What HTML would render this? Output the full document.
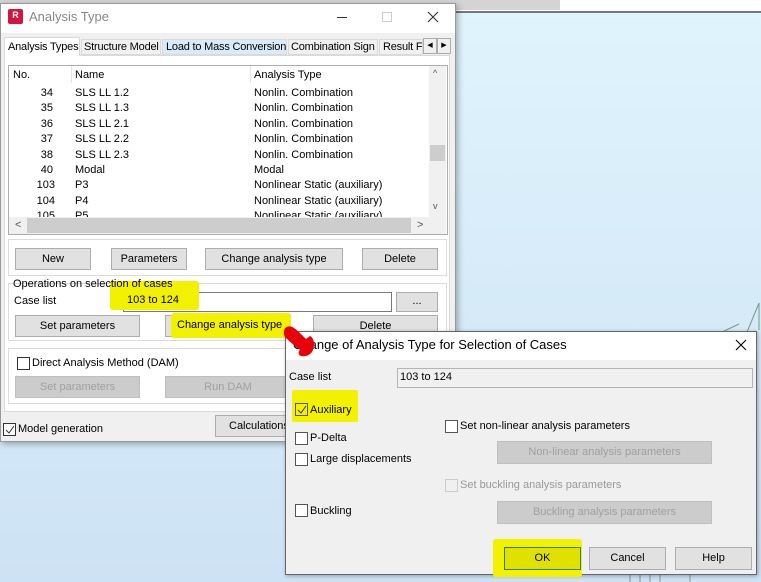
<!DOCTYPE html>
<html><head><meta charset="utf-8"><style>
*{box-sizing:border-box}
body{margin:0;width:761px;height:582px;overflow:hidden;position:relative;font-family:"Liberation Sans",Arial,sans-serif;font-size:11px;color:#000;background:linear-gradient(#e0f4fd,#cde2f4)}
.a{position:absolute;white-space:nowrap}
.btn{position:absolute;background:#e1e1e1;border:1px solid #adadad;text-align:center;font-size:11px;white-space:nowrap}
.dis{color:#a0a0a0;background:#cccccc;border-color:#bfbfbf}
.cb{position:absolute;width:13px;height:13px;border:1px solid #333;background:#fff}
.grp{position:absolute;border:1px solid #dcdcdc}
.hl{position:absolute;background:#f2f200}
.tab{position:absolute;border:1px solid #dadada;overflow:hidden;font-size:11px;letter-spacing:-0.2px;white-space:nowrap}
</style></head><body>
<div class="a" style="left:0;top:0;width:761px;height:11px;background:#fff"></div>
<div class="a" style="left:0;top:0;width:560px;height:10px;background:#d4d4d4"></div>
<div class="a" style="left:0;top:11px;width:761px;height:2px;background:#777"></div>

<div class="a" style="left:0;top:3px;width:456px;height:439px;background:#f0f0f0;border:1px solid #999;box-shadow:2px 2px 6px rgba(0,0,0,.3)"></div>
<div class="a" style="left:1px;top:4px;width:454px;height:29px;background:#fff"></div>
<div class="a" style="left:8px;top:9px;width:15px;height:15px;background:#d4163c;border-radius:2px;color:#fff;font-size:9px;font-weight:bold;text-align:center;line-height:12px">R</div>
<div class="a" style="left:29px;top:9px;font-size:13px;color:#888">Analysis Type</div>
<div class="a" style="left:337px;top:17px;width:10px;height:1px;background:#333"></div>
<div class="a" style="left:382px;top:12px;width:10px;height:10px;border:1px solid #ccc"></div>
<svg class="a" style="left:427px;top:11px" width="12" height="12"><path d="M1 1L11 11M11 1L1 11" stroke="#333" stroke-width="1.1"/></svg>

<div class="a" style="left:4px;top:55px;width:446px;height:357px;background:#fff;border:1px solid #dadada"></div>
<div class="tab" style="left:4px;top:37px;width:76px;height:19px;background:#fff;border-bottom:none;padding:3px 0 0 3px">Analysis Types</div>
<div class="tab" style="left:81px;top:39px;width:80px;height:16px;padding:1px 0 0 2px">Structure Model</div>
<div class="tab" style="left:162px;top:39px;width:125px;height:16px;background:#d9ebf9;padding:1px 0 0 3px">Load to Mass Conversion</div>
<div class="tab" style="left:288px;top:39px;width:90px;height:16px;padding:1px 0 0 2px">Combination Sign</div>
<div class="tab" style="left:379px;top:39px;width:44px;height:16px;padding:1px 0 0 3px">Result Fi</div>
<div class="a" style="left:423px;top:38px;width:14px;height:16px;border:1px solid #adadad;background:#f0f0f0;font-size:7px;text-align:center;line-height:14px">◀</div>
<div class="a" style="left:437px;top:38px;width:14px;height:16px;border:1px solid #adadad;background:#f0f0f0;font-size:7px;text-align:center;line-height:14px">▶</div>

<div class="a" style="left:8px;top:65px;width:440px;height:170px;background:#fff;border:1px solid #adadad"></div>
<div class="a" style="left:71px;top:66px;width:1px;height:17px;background:#e5e5e5"></div>
<div class="a" style="left:250px;top:66px;width:1px;height:17px;background:#e5e5e5"></div>
<div class="a" style="left:13px;top:69px">No.</div>
<div class="a" style="left:75px;top:69px">Name</div>
<div class="a" style="left:254px;top:69px">Analysis Type</div>
<div class="a" style="left:9px;top:84px;width:419px;height:133px;overflow:hidden">
<div style="position:absolute;left:0;top:2px;line-height:15.4px">
<div><span style="display:inline-block;width:66px;text-align:right;padding-right:22px">34</span><span style="display:inline-block;width:179px">SLS LL 1.2</span>Nonlin. Combination</div>
<div><span style="display:inline-block;width:66px;text-align:right;padding-right:22px">35</span><span style="display:inline-block;width:179px">SLS LL 1.3</span>Nonlin. Combination</div>
<div><span style="display:inline-block;width:66px;text-align:right;padding-right:22px">36</span><span style="display:inline-block;width:179px">SLS LL 2.1</span>Nonlin. Combination</div>
<div><span style="display:inline-block;width:66px;text-align:right;padding-right:22px">37</span><span style="display:inline-block;width:179px">SLS LL 2.2</span>Nonlin. Combination</div>
<div><span style="display:inline-block;width:66px;text-align:right;padding-right:22px">38</span><span style="display:inline-block;width:179px">SLS LL 2.3</span>Nonlin. Combination</div>
<div><span style="display:inline-block;width:66px;text-align:right;padding-right:22px">40</span><span style="display:inline-block;width:179px">Modal</span>Modal</div>
<div><span style="display:inline-block;width:66px;text-align:right;padding-right:20px">103</span><span style="display:inline-block;width:179px">P3</span>Nonlinear Static (auxiliary)</div>
<div><span style="display:inline-block;width:66px;text-align:right;padding-right:20px">104</span><span style="display:inline-block;width:179px">P4</span>Nonlinear Static (auxiliary)</div>
<div><span style="display:inline-block;width:66px;text-align:right;padding-right:20px">105</span><span style="display:inline-block;width:179px">P5</span>Nonlinear Static (auxiliary)</div>
</div></div>
<div class="a" style="left:429px;top:66px;width:17px;height:151px;background:#f0f0f0"></div>
<div class="a" style="left:433px;top:68px;font-size:9px;color:#555">^</div>
<div class="a" style="left:430px;top:145px;width:15px;height:16px;background:#cdcdcd"></div>
<div class="a" style="left:433px;top:201px;font-size:9px;color:#555">v</div>
<div class="a" style="left:9px;top:217px;width:437px;height:17px;background:#f0f0f0"></div>
<div class="a" style="left:27px;top:218px;width:384px;height:15px;background:#cdcdcd"></div>
<div class="a" style="left:15px;top:219px;color:#555">&lt;</div>
<div class="a" style="left:417px;top:219px;color:#555">&gt;</div>

<div class="grp" style="left:8px;top:239px;width:439px;height:37px"></div>
<div class="btn" style="left:15px;top:248px;width:76px;height:22px;line-height:20px">New</div>
<div class="btn" style="left:111px;top:248px;width:76px;height:22px;line-height:20px">Parameters</div>
<div class="btn" style="left:205px;top:248px;width:138px;height:22px;line-height:20px">Change analysis type</div>
<div class="btn" style="left:362px;top:248px;width:76px;height:22px;line-height:20px">Delete</div>

<div class="grp" style="left:8px;top:283px;width:439px;height:58px"></div>
<div class="a" style="left:123px;top:292px;width:269px;height:20px;border:1px solid #7a7a7a;background:#fff"></div>
<div class="hl" style="left:110px;top:281px;width:89px;height:29px;border-radius:3px"></div>
<div class="a" style="left:13px;top:278px">Operations on selection of cases</div>
<div class="a" style="left:14px;top:295px">Case list</div>
<div class="a" style="left:127px;top:294px">103 to 124</div>
<div class="btn" style="left:396px;top:292px;width:42px;height:20px;line-height:16px">...</div>
<div class="btn" style="left:15px;top:315px;width:125px;height:22px;line-height:20px">Set parameters</div>
<div class="btn" style="left:165px;top:315px;width:126px;height:22px"></div>
<div class="hl" style="left:171px;top:313px;width:120px;height:25px;border-radius:3px"></div>
<div class="a" style="left:177px;top:319px">Change analysis type</div>
<div class="btn" style="left:313px;top:315px;width:125px;height:22px;line-height:20px">Delete</div>

<div class="grp" style="left:8px;top:348px;width:439px;height:56px"></div>
<div class="cb" style="left:17px;top:357px"></div>
<div class="a" style="left:32px;top:357px">Direct Analysis Method (DAM)</div>
<div class="btn dis" style="left:15px;top:376px;width:125px;height:22px;line-height:20px">Set parameters</div>
<div class="btn dis" style="left:165px;top:376px;width:126px;height:22px;line-height:20px">Run DAM</div>

<div class="cb" style="left:3px;top:423px"></div>
<svg class="a" style="left:4px;top:424px" width="12" height="12"><path d="M2 6L5 9L10 2" stroke="#333" fill="none"/></svg>
<div class="a" style="left:18px;top:423px">Model generation</div>
<div class="btn" style="left:215px;top:415px;width:75px;height:22px;line-height:20px;text-align:left;padding-left:13px">Calculations</div>

<svg class="a" style="left:600px;top:300px" width="161" height="282"><path d="M138 54L159 3L159 30M120 33L139 24" stroke="#7a9a88" fill="none"/><path d="M30 270V282M40 270V282M50 268V282M60 268V282M90 262V282" stroke="#7a9a88"/></svg>

<div class="a" style="left:285px;top:331px;width:472px;height:244px;background:#f0f0f0;border:1px solid #666;box-shadow:1px 1px 4px rgba(0,0,0,.3)"></div>
<div class="a" style="left:286px;top:332px;width:470px;height:28px;background:#fff"></div>
<div class="a" style="left:293px;top:337px;font-size:13px">Change of Analysis Type for Selection of Cases</div>
<svg class="a" style="left:735px;top:339px" width="12" height="12"><path d="M1 1L11 11M11 1L1 11" stroke="#000" stroke-width="1.1"/></svg>
<svg class="a" style="left:280px;top:322px" width="50" height="45"><path d="M4 10C4 4 10 3 14 6C18 9 22 13 26 17L30 14C34 16 35 22 33 28C31 33 26 35 21 34C18 33 18 30 20 28C15 24 10 20 6 16C4 14 4 12 4 10Z" fill="#e8000b"/></svg>
<div class="a" style="left:289px;top:371px">Case list</div>
<div class="a" style="left:397px;top:368px;width:356px;height:20px;border:1px solid #b5b5b5;background:#f0f0f0;padding:2px 0 0 2px">103 to 124</div>

<div class="hl" style="left:292px;top:390px;width:66px;height:32px;border-radius:2px"></div>
<div class="cb" style="left:295px;top:403px;border-color:#555;background:transparent"></div>
<svg class="a" style="left:296px;top:404px" width="12" height="12"><path d="M2 6L5 9L10 2" stroke="#333" fill="none"/></svg>
<div class="a" style="left:310px;top:404px">Auxiliary</div>
<div class="cb" style="left:295px;top:432px;border-color:#555"></div>
<div class="a" style="left:310px;top:432px">P-Delta</div>
<div class="cb" style="left:295px;top:453px;border-color:#555"></div>
<div class="a" style="left:310px;top:453px">Large displacements</div>
<div class="cb" style="left:295px;top:504px;border-color:#555"></div>
<div class="a" style="left:310px;top:505px">Buckling</div>
<div class="cb" style="left:445px;top:420px;border-color:#555"></div>
<div class="a" style="left:460px;top:420px">Set non-linear analysis parameters</div>
<div class="btn dis" style="left:497px;top:441px;width:215px;height:23px;line-height:21px">Non-linear analysis parameters</div>
<div class="cb" style="left:445px;top:479px;border-color:#ccc;background:#f0f0f0"></div>
<div class="a" style="left:460px;top:479px;color:#999">Set buckling analysis parameters</div>
<div class="btn dis" style="left:497px;top:501px;width:215px;height:23px;line-height:21px">Buckling analysis parameters</div>

<div class="hl" style="left:493px;top:539px;width:89px;height:38px;border-radius:3px"></div>
<div class="btn" style="left:504px;top:547px;width:77px;height:23px;line-height:21px;background:#e1e100;border:1px solid #2f7d2f">OK</div>
<div class="btn" style="left:589px;top:547px;width:77px;height:23px;line-height:21px">Cancel</div>
<div class="btn" style="left:675px;top:547px;width:77px;height:23px;line-height:21px">Help</div>
</body></html>
